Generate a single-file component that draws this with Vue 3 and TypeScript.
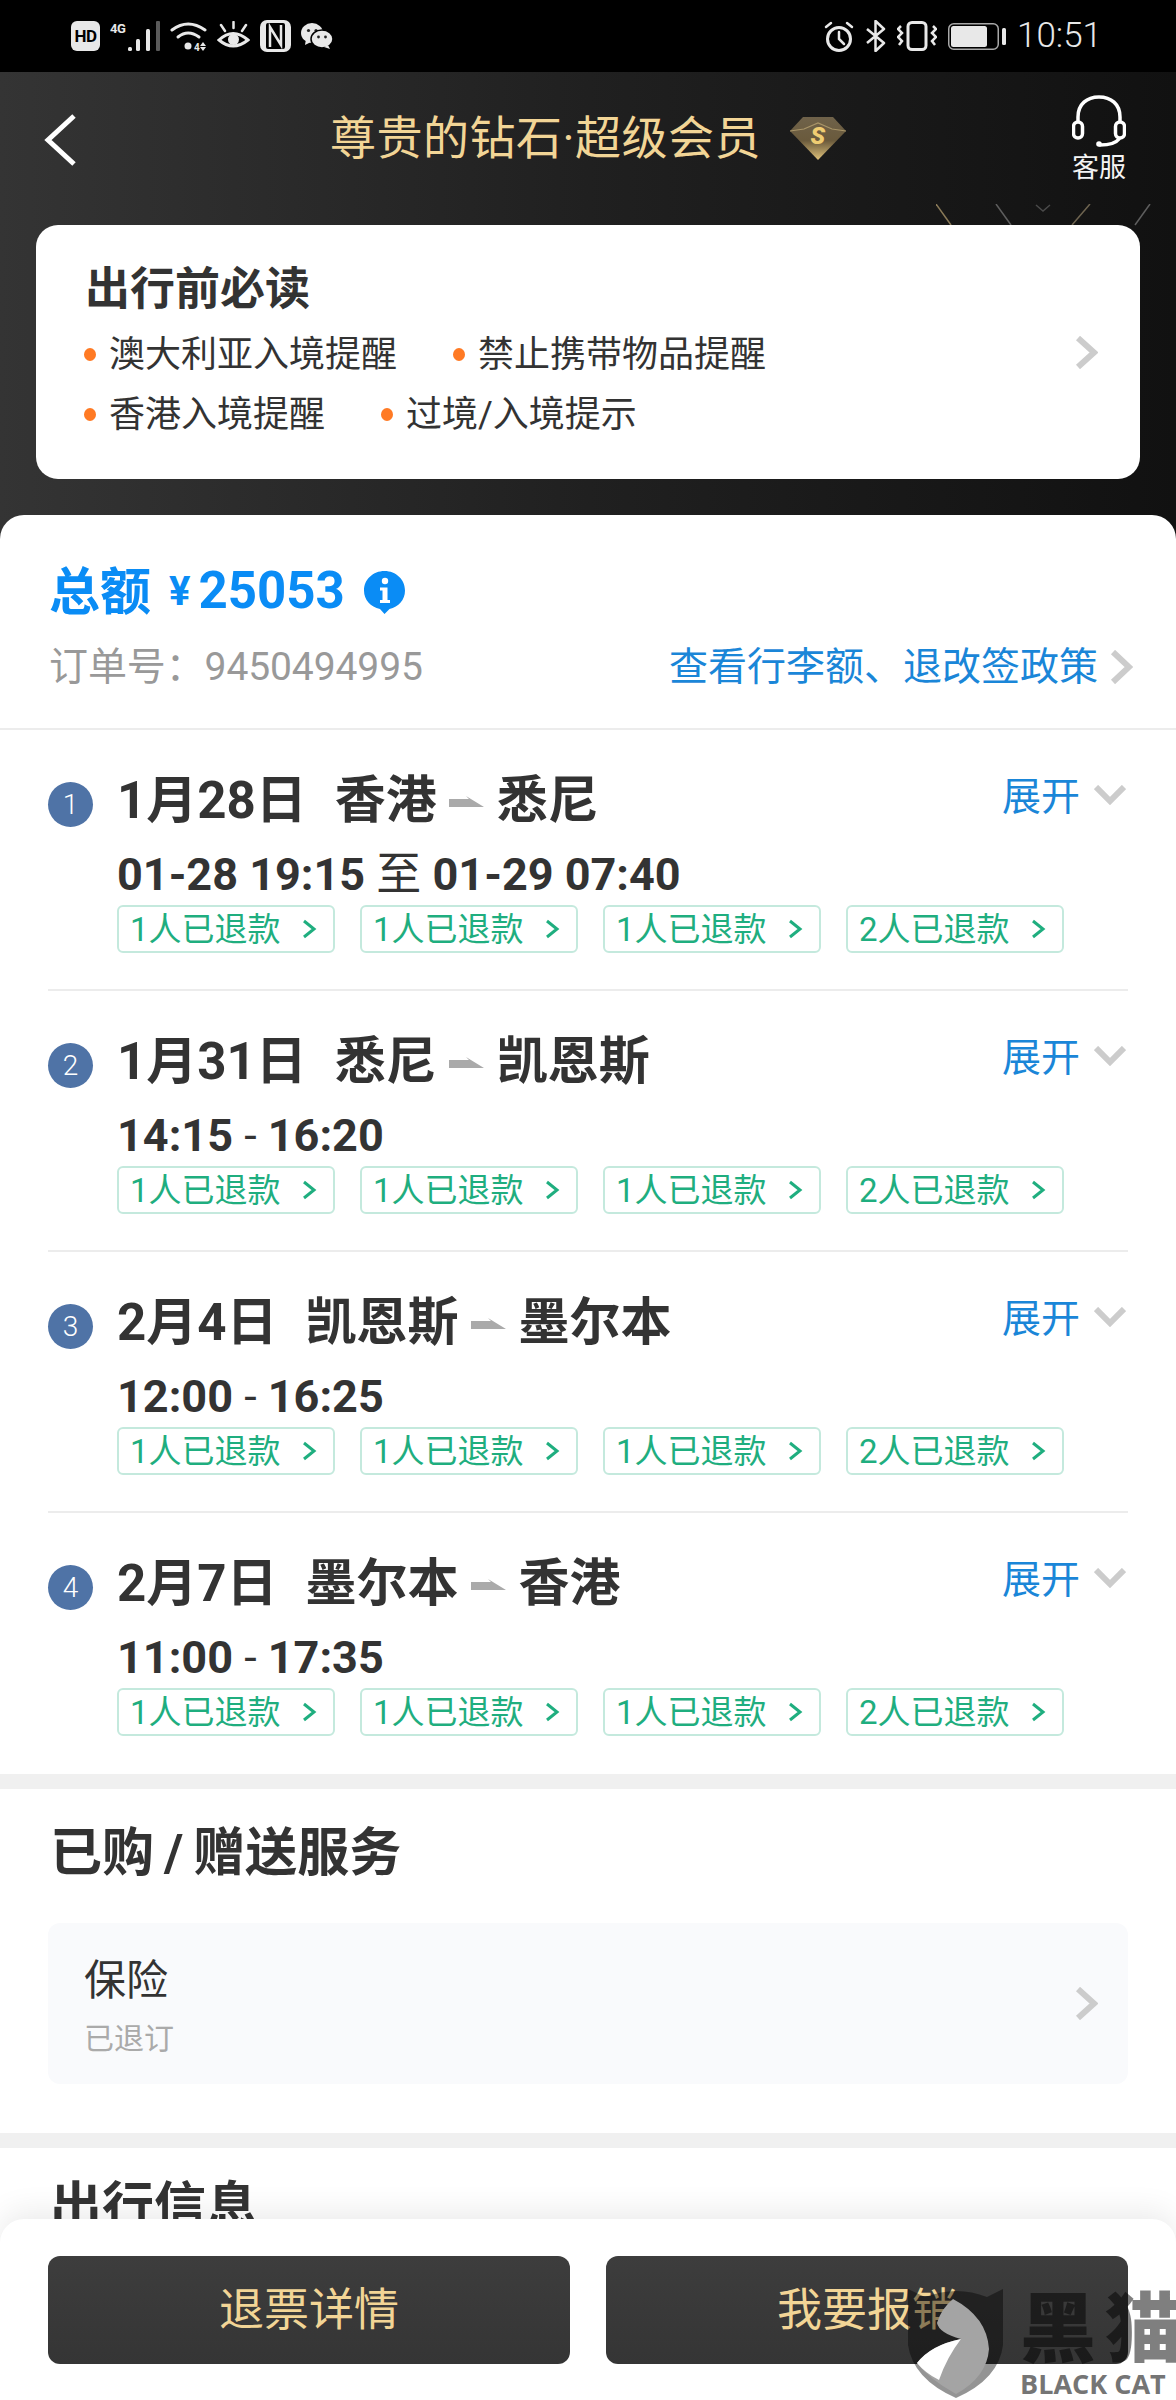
<script setup lang="ts">
interface Trip {
  no: number;
  date: string;
  from: string;
  to: string;
  start: string;
  sep: string;
  end: string;
}

const trips: Trip[] = [
  { no: 1, date: '1月28日', from: '香港', to: '悉尼', start: '01-28 19:15', sep: '至', end: '01-29 07:40' },
  { no: 2, date: '1月31日', from: '悉尼', to: '凯恩斯', start: '14:15', sep: '-', end: '16:20' },
  { no: 3, date: '2月4日', from: '凯恩斯', to: '墨尔本', start: '12:00', sep: '-', end: '16:25' },
  { no: 4, date: '2月7日', from: '墨尔本', to: '香港', start: '11:00', sep: '-', end: '17:35' },
];

const refunds = ['1人已退款', '1人已退款', '1人已退款', '2人已退款'];

const noticeRows = [
  ['澳大利亚入境提醒', '禁止携带物品提醒'],
  ['香港入境提醒', '过境/入境提示'],
];
</script>

<template>
  <div class="page">
    <div class="status">
      <div class="status-group left">
        <span class="hd">HD</span>
        <svg width="50" height="32" viewBox="0 0 50 32">
          <text x="0" y="13" class="net">4G</text>
          <rect x="18" y="27" width="4" height="4" rx="1.5" fill="#e8e8e8" />
          <rect x="26" y="19" width="4" height="12" rx="1.5" fill="#e8e8e8" />
          <rect x="36" y="9" width="4" height="22" rx="1.5" fill="#e8e8e8" />
          <rect x="46" y="1" width="4" height="30" rx="1" fill="#5a5a5a" />
        </svg>
        <svg width="37" height="30" viewBox="0 0 37 30" fill="none" stroke="#e8e8e8" stroke-width="3" stroke-linecap="round">
          <path d="M2 9Q18 -3 35 9" />
          <path d="M8 16Q18 8 29 16" />
          <circle cx="18" cy="25" r="3.5" fill="#e8e8e8" stroke="none" />
          <text x="24" y="30" class="tiny" stroke="none">4</text>
          <path d="M33 21l3 4h-6z M30 26h6l-3 4z" fill="#e8e8e8" stroke="none" />
        </svg>
        <svg width="33" height="30" viewBox="0 0 33 30" fill="none" stroke="#e8e8e8" stroke-width="3" stroke-linecap="round">
          <path d="M2 19Q16 6 31 19Q16 31 2 19Z" />
          <circle cx="16.500" cy="18.500" r="5.500" fill="#e8e8e8" stroke="none" />
          <path d="M16.500 1V7M4 4L8 10M29 4L25 10" stroke-width="2.500" />
        </svg>
        <svg width="31" height="32" viewBox="0 0 31 32" fill="none">
          <rect width="31" height="32" rx="7" fill="#e8e8e8" />
          <rect x="6" y="3" width="19" height="26" rx="2" fill="#000" />
          <path d="M10 27V7L21 25V5" stroke="#e8e8e8" stroke-width="2.500" />
        </svg>
        <svg width="32" height="26" viewBox="0 0 32 26">
          <ellipse cx="11" cy="10" rx="11" ry="10" fill="#e8e8e8" />
          <path d="M5 16l-1 6 6-3z" fill="#e8e8e8" />
          <circle cx="7.500" cy="7.500" r="1.600" fill="#222" />
          <circle cx="15" cy="7.500" r="1.600" fill="#222" />
          <ellipse cx="21" cy="16" rx="11" ry="9" fill="#e8e8e8" stroke="#000" stroke-width="1.500" />
          <path d="M27 22l2 4-6-2z" fill="#e8e8e8" />
          <circle cx="17.500" cy="14" r="1.400" fill="#222" />
          <circle cx="24.500" cy="14" r="1.400" fill="#222" />
        </svg>
      </div>
      <div class="status-group right">
        <svg width="30" height="31" viewBox="0 0 30 31" fill="none" stroke="#e8e8e8" stroke-linecap="round">
          <circle cx="15" cy="18" r="11.500" stroke-width="3" />
          <path d="M15 11V18L20 23" stroke-width="2.500" />
          <path d="M2 6L7 2M28 6L23 2" stroke-width="2.500" />
        </svg>
        <svg width="21" height="32" viewBox="0 0 21 32" fill="none" stroke="#e8e8e8" stroke-width="2.500" stroke-linejoin="round">
          <path d="M2 9L19 23L10.500 31V1L19 9L2 23" />
        </svg>
        <svg width="40" height="30" viewBox="0 0 40 30" fill="none" stroke="#e8e8e8">
          <rect x="11" y="1.500" width="18" height="27" rx="4" stroke-width="3" />
          <path d="M4 5L1 8L5 12L1 16L5 20L2 24M36 5L39 8L35 12L39 16L35 20L38 24" stroke-width="2.500" />
        </svg>
        <svg width="58" height="27" viewBox="0 0 58 27">
          <rect x="0.750" y="0.750" width="49.500" height="25.500" rx="5" fill="none" stroke="#a8a8a8" stroke-width="1.500" />
          <rect x="3" y="3" width="36" height="21" rx="2.500" fill="#e8e8e8" />
          <rect x="54" y="5" width="4" height="17" rx="1.500" fill="#e8e8e8" />
        </svg>
        <span class="clock">10:51</span>
      </div>
    </div>

    <div class="hero">
      <svg class="hero-lines" width="240" height="22" viewBox="0 0 240 22" fill="none" stroke-width="1.500">
        <path d="M0 0L15 21" stroke="#8a7a58" />
        <path d="M60 0L75 21" stroke="#5e5e5e" />
        <path d="M100 1L107 7L114 1" stroke="#4a4a4a" />
        <path d="M154 0L136 21" stroke="#6e6450" />
        <path d="M214 0L199 21" stroke="#5e5e5e" />
      </svg>
      <div class="nav">
        <div class="nav-back">
          <svg width="32" height="52" viewBox="0 0 32 52" fill="none" stroke="#fff" stroke-width="5">
            <path d="M30 2L4 26L30 50" />
          </svg>
        </div>
        <div class="nav-title">
          <span>尊贵的钻石·超级会员</span>
          <svg width="56" height="44" viewBox="0 0 56 44">
            <defs>
              <linearGradient id="gem" x1="0" y1="0" x2="0" y2="1">
                <stop offset="0" stop-color="#6f624a" />
                <stop offset="0.55" stop-color="#6a5a3c" />
                <stop offset="1" stop-color="#e0c27a" />
              </linearGradient>
            </defs>
            <path d="M13 1H43L56 15L28 44L0 15Z" fill="url(#gem)" />
            <path d="M0 15L14 13L28 7L42 13L56 15" fill="none" stroke="#a89468" stroke-width="1.200" />
            <text x="28" y="28" class="gem-s">S</text>
          </svg>
        </div>
        <div class="nav-service">
          <svg width="54" height="52" viewBox="0 0 54 52" fill="none" stroke="#fff" stroke-width="3.500" stroke-linecap="round">
            <path d="M6 26V22C6 9 15 2 27 2C39 2 48 9 48 22V26" />
            <rect x="1.500" y="27" width="9" height="16" rx="4.500" />
            <rect x="43.500" y="27" width="9" height="16" rx="4.500" />
            <path d="M47 44C44 48 38 50 28 50" />
            <circle cx="27" cy="49" r="2.800" fill="#fff" stroke="none" />
          </svg>
          <span>客服</span>
        </div>
      </div>

      <div class="notice">
        <div class="notice-body">
          <h2 class="notice-title">出行前必读</h2>
          <div v-for="(row, i) in noticeRows" :key="i" class="notice-row">
            <span v-for="item in row" :key="item" class="notice-item">
              <i class="dot" />{{ item }}
            </span>
          </div>
        </div>
        <svg class="chev-right" width="23" height="33" viewBox="0 0 23 33" fill="none">
          <path d="M3 2L19 16.500L3 31" />
        </svg>
      </div>
    </div>

    <div class="sheet">
      <div class="summary">
        <div class="total">
          <span class="total-label">总额</span>
          <span class="total-yen">¥</span>
          <span class="total-sum">25053</span>
          <svg class="info" width="41" height="43" viewBox="0 0 41 43">
            <path d="M20.500 0C32 0 41 8.500 41 19.500C41 29 34.500 36 25.500 38L20.500 43L16 38C6.500 36 0 29 0 19.500C0 8.500 9 0 20.500 0Z" fill="#0a8cf5" />
            <circle cx="21" cy="10" r="3.200" fill="#fff" />
            <path d="M16 16.500H23.500V29H26V32H16V29H18.500V19.500H16Z" fill="#fff" />
          </svg>
        </div>
        <div class="order">
          <span class="order-no">订单号：9450494995</span>
          <span class="order-link">
            查看行李额、退改签政策
            <svg class="chev-right" width="23" height="34" viewBox="0 0 23 34" fill="none">
              <path d="M3 2L19 17L3 32" />
            </svg>
          </span>
        </div>
      </div>

      <div v-for="(trip, i) in trips" :key="trip.no" class="trip" :class="{ 'trip--last': i === trips.length - 1 }">
        <span class="trip-no">{{ trip.no }}</span>
        <div class="trip-main">
          <div class="trip-head">
            <div class="trip-title">
              <span class="trip-date">{{ trip.date }}</span>
              <span>{{ trip.from }}</span>
              <svg class="trip-arrow" width="35" height="11" viewBox="0 0 35 11">
                <path d="M0 3H20L17 0L35 11H0Z" fill="#aaa" />
              </svg>
              <span>{{ trip.to }}</span>
            </div>
            <div class="trip-toggle">
              <span class="toggle-text">展开</span>
              <svg width="32" height="20" viewBox="0 0 32 20" fill="none" stroke="#ccc" stroke-width="6">
                <path d="M2 2L16 16L30 2" />
              </svg>
            </div>
          </div>
          <div class="trip-time">
            {{ trip.start }} <span class="trip-sep">{{ trip.sep }}</span> {{ trip.end }}
          </div>
          <div class="tags">
            <span v-for="(tag, t) in refunds" :key="t" class="tag">
              <span class="tag-text">{{ tag }}</span>
              <svg width="15" height="20" viewBox="0 0 15 20" fill="none" stroke="#1fae7f" stroke-width="3">
                <path d="M2 2L12 10L2 18" />
              </svg>
            </span>
          </div>
        </div>
      </div>

      <div class="band" />

      <section class="services">
        <h2 class="section-title section-title--slash">已购 / 赠送服务</h2>
        <div class="service-card">
          <div class="service-text">
            <div class="service-name">保险</div>
            <div class="service-state">已退订</div>
          </div>
          <svg class="chev-right" width="23" height="33" viewBox="0 0 23 33" fill="none">
            <path d="M3 2L19 16.500L3 31" />
          </svg>
        </div>
      </section>

      <div class="band" />

      <section class="travel">
        <h2 class="section-title">出行信息</h2>
      </section>
    </div>

    <div class="actions">
      <button type="button" class="action">退票详情</button>
      <button type="button" class="action">我要报销</button>
    </div>

    <div class="watermark">
      <svg class="wm-logo" width="98" height="112" viewBox="0 0 98 112">
        <path d="M1 2L18 10Q50 -2 80 10L96 2V58Q92 92 49 111Q6 92 1 58Z" fill="rgba(0,0,0,0.42)" />
        <path d="M46 12Q80 30 82 62Q80 90 49 107Q22 92 10 76Q24 58 54 52Q32 46 30 36Q34 22 46 12Z" fill="#a4a4a4" />
        <path d="M10 76Q24 58 54 52Q40 70 32 93Q18 86 10 76Z" fill="#fff" />
      </svg>
      <div class="wm-text">
        <div class="wm-cn">黑猫</div>
        <div class="wm-en">BLACK CAT</div>
      </div>
    </div>
  </div>
</template>

<style scoped>
.page {
  position: relative;
  width: 1176px;
  height: 2400px;
  overflow: hidden;
  background: #fff;
  color: #333;
  font-family: Roboto, "Noto Sans CJK SC", sans-serif;
}

.status {
  display: flex;
  align-items: center;
  justify-content: space-between;
  height: 72px;
  padding: 0 74px 0 71px;
  box-sizing: border-box;
  background: #000;
}
.status-group {
  display: flex;
  align-items: center;
}
.status-group.left { gap: 10px; }
.status-group.right { gap: 11px; }
.hd {
  width: 29px;
  height: 30px;
  border-radius: 6px;
  background: #e8e8e8;
  color: #000;
  font-size: 17px;
  font-weight: 700;
  line-height: 30px;
  text-align: center;
  letter-spacing: -0.5px;
}
.net {
  fill: #e8e8e8;
  font-size: 13px;
  font-weight: 700;
  letter-spacing: -0.5px;
}
.tiny {
  fill: #e8e8e8;
  font-size: 10px;
  font-weight: 700;
}
.clock {
  color: #e8e8e8;
  font-size: 35px;
  font-weight: 300;
  line-height: 40px;
}

.hero {
  position: relative;
  height: 467px;
  background: linear-gradient(90deg, #343434 0%, #202020 50%, #111 100%);
}
.hero-lines {
  position: absolute;
  top: 132px;
  left: 936px;
}
.nav {
  display: grid;
  grid-template-columns: 1fr auto 1fr;
  align-items: center;
  height: 128px;
}
.nav-back {
  display: flex;
  margin-top: 8px;
  padding-left: 44px;
}
.nav-title {
  display: flex;
  align-items: center;
  gap: 29px;
  margin-top: 3px;
  color: #f2d596;
  font-size: 46px;
  line-height: 56px;
  letter-spacing: 0.5px;
}
.nav-service {
  display: flex;
  flex-direction: column;
  align-items: center;
  justify-self: end;
  gap: 6px;
  margin-top: 6px;
  padding-right: 50px;
  color: #f4f4f4;
  font-size: 27px;
  line-height: 30px;
}
.gem-s {
  fill: #f0cd72;
  font-size: 24px;
  font-weight: 900;
  font-style: italic;
  text-anchor: middle;
}

.notice {
  position: relative;
  display: flex;
  align-items: center;
  height: 254px;
  margin: 25px 36px 0;
  padding: 0 42px 0 48px;
  box-sizing: border-box;
  border-radius: 22px;
  background: #fff;
}
.notice-body {
  flex: 1;
  padding-bottom: 4px;
}
.notice-title {
  margin: 0 0 13px 1px;
  font-size: 45px;
  font-weight: 700;
  line-height: 56px;
}
.notice-row {
  display: flex;
  gap: 56px;
  margin-bottom: 12px;
  font-size: 36px;
  line-height: 48px;
}
.notice-row:last-child { margin-bottom: 0; }
.notice-item { display: flex; align-items: center; }
.dot {
  width: 12px;
  height: 13px;
  margin-right: 13px;
  border-radius: 50%;
  background: #ff7a24;
}
.chev-right path {
  stroke: #ccc;
  stroke-width: 6;
}

.sheet {
  position: relative;
  margin-top: -24px;
  border-radius: 24px 24px 0 0;
  background: #fff;
}
.summary {
  height: 215px;
  padding: 45px 43px 0 49px;
  box-sizing: border-box;
  border-bottom: 2px solid #ececec;
}
.total {
  display: flex;
  align-items: center;
  height: 60px;
  color: #0a8cf5;
  font-weight: 700;
}
.total-label {
  margin-right: 18px;
  margin-bottom: 5px;
  font-size: 51px;
}
.total-yen {
  margin-right: 8px;
  margin-top: 2px;
  font-size: 40px;
}
.total-sum { font-size: 51px; }
.info { margin-left: 19px; margin-top: 4px; }
.order {
  display: flex;
  align-items: center;
  justify-content: space-between;
  margin-top: 24px;
  line-height: 46px;
}
.order-no {
  color: #999;
  font-size: 39px;
  letter-spacing: -0.1px;
}
.order-link {
  display: flex;
  align-items: center;
  gap: 12px;
  color: #1a86d8;
  font-size: 39px;
}

.trip {
  position: relative;
  display: flex;
  gap: 24px;
  height: 261px;
  margin: 0 48px;
  padding-top: 46px;
  box-sizing: border-box;
  border-bottom: 2px solid #ececec;
}
.trip--last { border-bottom: none; }
.trip-no {
  flex: none;
  width: 45px;
  height: 45px;
  margin-top: 6px;
  border-radius: 50%;
  background: #4f73a6;
  color: #fff;
  font-size: 28px;
  font-weight: 300;
  line-height: 45px;
  text-align: center;
}
.trip-main { flex: 1; min-width: 0; }
.trip-head {
  display: flex;
  justify-content: space-between;
}
.trip-title {
  display: flex;
  align-items: center;
  font-size: 51px;
  font-weight: 700;
  line-height: 50px;
}
.trip-date { margin-right: 28px; }
.trip-arrow { margin: 0 13px 0 12px; }
.trip-toggle {
  display: flex;
  align-items: center;
  gap: 14px;
  height: 40px;
  padding-right: 2px;
  color: #1a86d8;
  font-size: 39px;
}
.toggle-text { margin-top: -6px; }
.trip-toggle svg { margin-top: -3px; }
.trip-time {
  margin-top: 24px;
  font-size: 45px;
  font-weight: 700;
  line-height: 50px;
}
.trip-sep { font-weight: 400; }
.tags {
  display: flex;
  gap: 25px;
  margin-top: 5px;
}
.tag {
  display: flex;
  align-items: center;
  justify-content: space-between;
  width: 218px;
  height: 48px;
  padding: 0 16px 0 11px;
  box-sizing: border-box;
  border: 2px solid #c4e9dd;
  border-radius: 6px;
  color: #1fae7f;
  font-size: 33px;
}
.tag-text { margin-top: -5px; }

.band {
  height: 15px;
  background: #f0f0f0;
}
.services {
  height: 344px;
  padding: 35px 48px 0;
  box-sizing: border-box;
}
.section-title {
  margin: 0 0 0 2px;
  font-size: 52px;
  font-weight: 700;
  line-height: 60px;
}
.section-title--slash { word-spacing: -3px; }
.service-card {
  display: flex;
  align-items: center;
  justify-content: space-between;
  height: 161px;
  margin-top: 39px;
  padding: 0 30px 0 36px;
  box-sizing: border-box;
  border-radius: 12px;
  background: #f9fafc;
}
.service-text { margin-top: 5px; }
.service-name {
  font-size: 42px;
  line-height: 50px;
}
.service-state {
  margin-top: 15px;
  color: #aaa;
  font-size: 30px;
  line-height: 36px;
}
.travel {
  height: 200px;
  padding: 30px 48px 0;
  box-sizing: border-box;
}

.actions {
  position: absolute;
  left: 0;
  right: 0;
  top: 2219px;
  bottom: 0;
  display: flex;
  gap: 36px;
  padding: 37px 48px 0;
  box-sizing: border-box;
  border-radius: 24px 24px 0 0;
  background: #fff;
  box-shadow: 0 -8px 30px rgba(0, 0, 0, 0.08);
}
.action {
  flex: 1;
  height: 108px;
  padding: 0 0 7px;
  border: none;
  border-radius: 12px;
  background: linear-gradient(180deg, #3d3d3d, #353535);
  color: #f2d596;
  font-family: inherit;
  font-size: 45px;
}

.watermark {
  position: absolute;
  left: 907px;
  top: 2287px;
  display: flex;
  gap: 15px;
  width: 280px;
}
.wm-logo { flex: none; }
.wm-cn {
  margin-top: 1px;
  color: rgba(0, 0, 0, 0.5);
  font-size: 76px;
  font-weight: 900;
  line-height: 84px;
  letter-spacing: 9px;
  white-space: nowrap;
}
.wm-en {
  margin-top: -1px;
  color: #757575;
  font-size: 27px;
  font-weight: 700;
  line-height: 26px;
  white-space: nowrap;
  font-family: "Open Sans", sans-serif;
}
</style>
